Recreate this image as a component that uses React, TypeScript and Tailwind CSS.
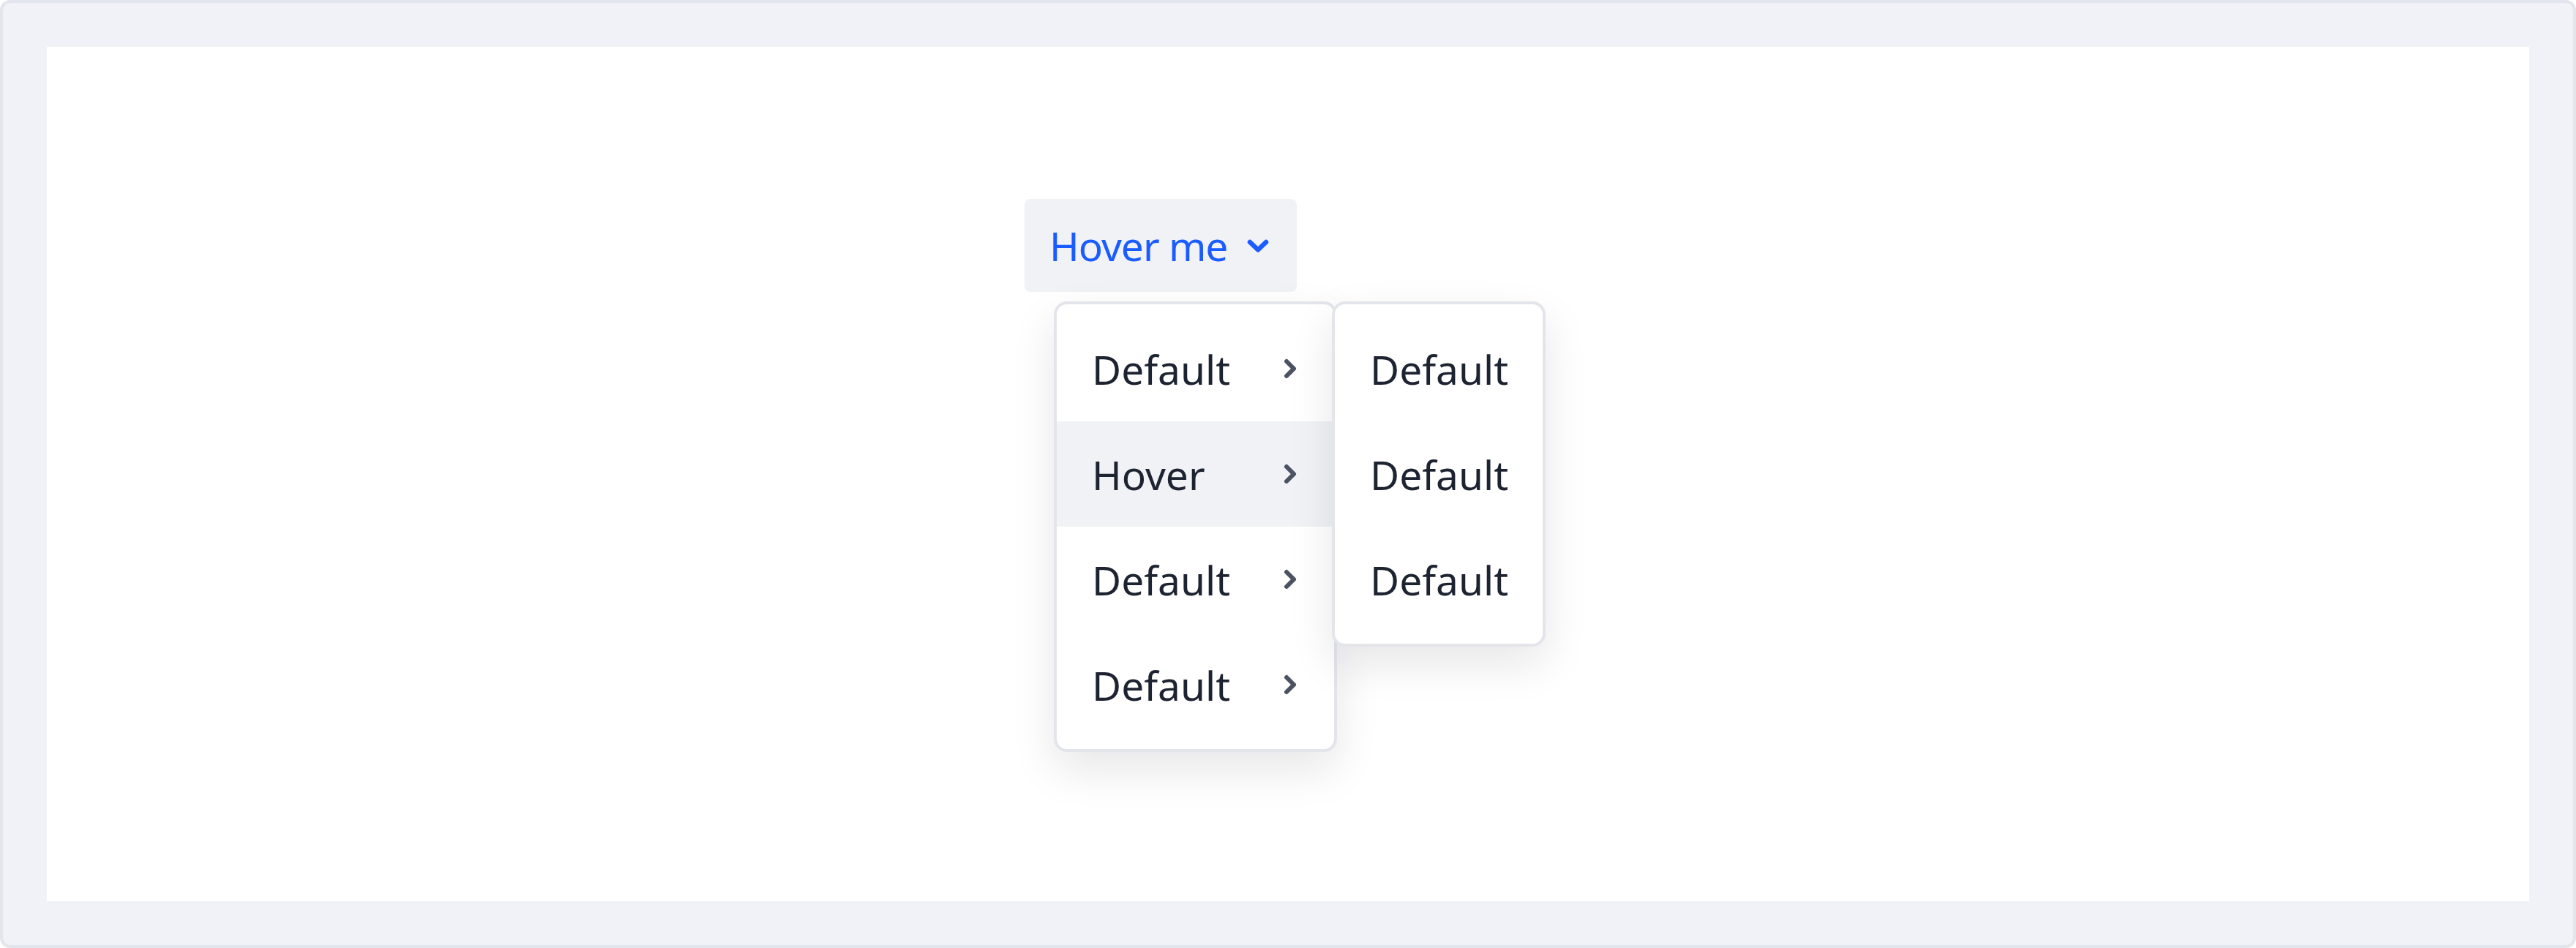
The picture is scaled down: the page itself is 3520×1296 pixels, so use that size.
import React from 'react';

const font = { fontFamily: '"Noto Sans", "Open Sans", sans-serif' };

function ChevronRight() {
  return (
    <svg width="22" height="30" viewBox="0 0 22 30" fill="none" className="shrink-0">
      <polyline points="5,5 15,15 5,25" stroke="#4b5262" strokeWidth="6" strokeLinecap="round" strokeLinejoin="round" />
    </svg>
  );
}

function ChevronDown() {
  return (
    <svg width="32" height="22" viewBox="0 0 32 22" fill="none" className="shrink-0">
      <polyline points="5,5 16,15.5 27,5" stroke="#1a5cff" strokeWidth="6.5" strokeLinecap="round" strokeLinejoin="round" />
    </svg>
  );
}

const items = ['Default', 'Hover', 'Default', 'Default'];
const subItems = ['Default', 'Default', 'Default'];

export default function App() {
  return (
    <div style={font} className="w-full h-[1296px] flex border-4 border-[#e3e5ec] rounded-[14px] bg-[#f0f2f7] p-[60px]">
      <div className="flex-1 bg-white flex justify-center pt-[208px]">
        {/* Dropdown */}
        <div className="relative w-[720px] h-[620px]">
          <button className="flex items-center h-[127px] w-[372px] rounded-[8px] bg-[#f1f2f5] pl-[34px] text-[55px] leading-none text-[#1a5cff]">
            <span className="tracking-[-1px]">Hover me</span>
            <span className="ml-[26px] mt-[2px]">
              <ChevronDown />
            </span>
          </button>

          {/* Main menu */}
          <div className="absolute left-[40px] top-[140px] w-[387px] py-4 bg-white border-4 border-[#e4e5ea] rounded-[18px] shadow-[0_24px_60px_rgba(17,24,39,0.10)]">
            {items.map((label, i) => (
              <div
                key={i}
                className={`flex items-center justify-between h-[144px] px-12 text-[55px] text-[#1d2330] ${label === 'Hover' ? 'bg-[#f1f2f5]' : ''}`}
              >
                <span className="leading-none">{label}</span>
                <ChevronRight />
              </div>
            ))}
          </div>

          {/* Sub menu */}
          <div className="absolute left-[420px] top-[140px] w-[292px] py-4 bg-white border-4 border-[#e4e5ea] rounded-[18px] shadow-[0_24px_60px_rgba(17,24,39,0.10)]">
            {subItems.map((label, i) => (
              <div key={i} className="flex items-center h-[144px] px-12 text-[55px] text-[#1d2330]">
                <span className="leading-none">{label}</span>
              </div>
            ))}
          </div>
        </div>
      </div>
    </div>
  );
}
